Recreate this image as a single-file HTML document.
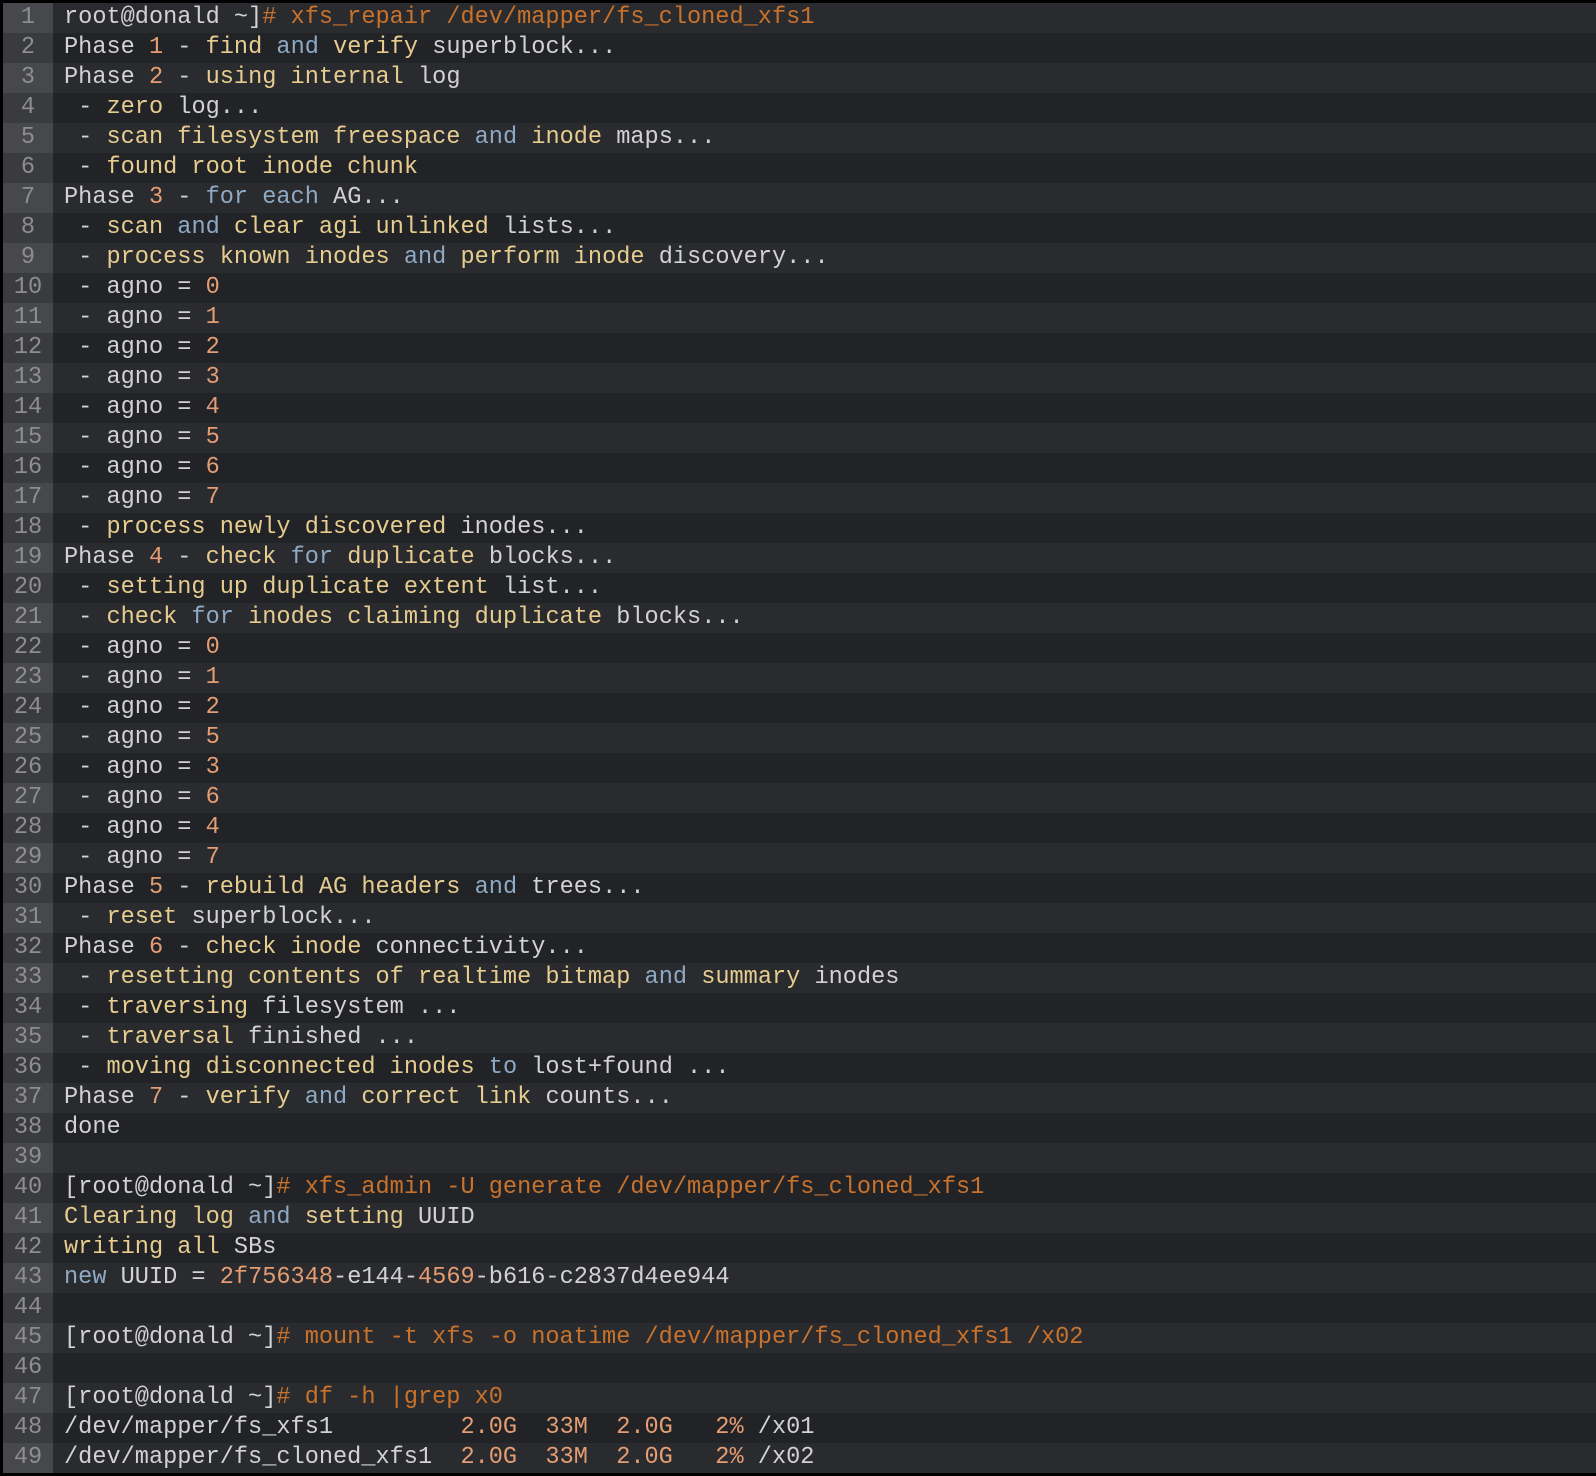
<!DOCTYPE html>
<html><head><meta charset="utf-8">
<style>
html,body{margin:0;padding:0;background:#000;}
body{width:1596px;height:1476px;overflow:hidden;}
#wrap{position:absolute;left:3px;top:3px;width:1593px;height:1470px;}
.r{height:30px;line-height:30px;display:flex;font-family:"Liberation Mono",monospace;font-size:23.6px;white-space:pre;color:#d2d2d2;}
.r:nth-child(odd){background:#2a2b2f;}
.r:nth-child(even){background:#222327;}
.g{width:50px;text-align:center;color:#8e8e90;flex:none;}
.r:nth-child(odd) .g{background:#47484b;}
.r:nth-child(even) .g{background:#3a3b3e;}
.t{padding-left:11px;}
.y{color:#e6cd8f;}
.b{color:#8ea9c4;}
.n{color:#e49d72;}
.o{color:#c8722c;}
</style></head><body><div id="wrap">
<div class="r"><div class="g">1</div><div class="t">root@donald ~]<span class="o"># xfs_repair /dev/mapper/fs_cloned_xfs1</span></div></div>
<div class="r"><div class="g">2</div><div class="t">Phase <span class="n">1</span> - <span class="y">find</span> <span class="b">and</span> <span class="y">verify</span> superblock...</div></div>
<div class="r"><div class="g">3</div><div class="t">Phase <span class="n">2</span> - <span class="y">using internal</span> log</div></div>
<div class="r"><div class="g">4</div><div class="t"> - <span class="y">zero</span> log...</div></div>
<div class="r"><div class="g">5</div><div class="t"> - <span class="y">scan filesystem freespace</span> <span class="b">and</span> <span class="y">inode</span> maps...</div></div>
<div class="r"><div class="g">6</div><div class="t"> - <span class="y">found root inode chunk</span></div></div>
<div class="r"><div class="g">7</div><div class="t">Phase <span class="n">3</span> - <span class="b">for each</span> AG...</div></div>
<div class="r"><div class="g">8</div><div class="t"> - <span class="y">scan</span> <span class="b">and</span> <span class="y">clear agi unlinked</span> lists...</div></div>
<div class="r"><div class="g">9</div><div class="t"> - <span class="y">process known inodes</span> <span class="b">and</span> <span class="y">perform inode</span> discovery...</div></div>
<div class="r"><div class="g">10</div><div class="t"> - agno = <span class="n">0</span></div></div>
<div class="r"><div class="g">11</div><div class="t"> - agno = <span class="n">1</span></div></div>
<div class="r"><div class="g">12</div><div class="t"> - agno = <span class="n">2</span></div></div>
<div class="r"><div class="g">13</div><div class="t"> - agno = <span class="n">3</span></div></div>
<div class="r"><div class="g">14</div><div class="t"> - agno = <span class="n">4</span></div></div>
<div class="r"><div class="g">15</div><div class="t"> - agno = <span class="n">5</span></div></div>
<div class="r"><div class="g">16</div><div class="t"> - agno = <span class="n">6</span></div></div>
<div class="r"><div class="g">17</div><div class="t"> - agno = <span class="n">7</span></div></div>
<div class="r"><div class="g">18</div><div class="t"> - <span class="y">process newly discovered</span> inodes...</div></div>
<div class="r"><div class="g">19</div><div class="t">Phase <span class="n">4</span> - <span class="y">check</span> <span class="b">for</span> <span class="y">duplicate</span> blocks...</div></div>
<div class="r"><div class="g">20</div><div class="t"> - <span class="y">setting up duplicate extent</span> list...</div></div>
<div class="r"><div class="g">21</div><div class="t"> - <span class="y">check</span> <span class="b">for</span> <span class="y">inodes claiming duplicate</span> blocks...</div></div>
<div class="r"><div class="g">22</div><div class="t"> - agno = <span class="n">0</span></div></div>
<div class="r"><div class="g">23</div><div class="t"> - agno = <span class="n">1</span></div></div>
<div class="r"><div class="g">24</div><div class="t"> - agno = <span class="n">2</span></div></div>
<div class="r"><div class="g">25</div><div class="t"> - agno = <span class="n">5</span></div></div>
<div class="r"><div class="g">26</div><div class="t"> - agno = <span class="n">3</span></div></div>
<div class="r"><div class="g">27</div><div class="t"> - agno = <span class="n">6</span></div></div>
<div class="r"><div class="g">28</div><div class="t"> - agno = <span class="n">4</span></div></div>
<div class="r"><div class="g">29</div><div class="t"> - agno = <span class="n">7</span></div></div>
<div class="r"><div class="g">30</div><div class="t">Phase <span class="n">5</span> - <span class="y">rebuild AG headers</span> <span class="b">and</span> trees...</div></div>
<div class="r"><div class="g">31</div><div class="t"> - <span class="y">reset</span> superblock...</div></div>
<div class="r"><div class="g">32</div><div class="t">Phase <span class="n">6</span> - <span class="y">check inode</span> connectivity...</div></div>
<div class="r"><div class="g">33</div><div class="t"> - <span class="y">resetting contents of realtime bitmap</span> <span class="b">and</span> <span class="y">summary</span> inodes</div></div>
<div class="r"><div class="g">34</div><div class="t"> - <span class="y">traversing</span> filesystem ...</div></div>
<div class="r"><div class="g">35</div><div class="t"> - <span class="y">traversal</span> finished ...</div></div>
<div class="r"><div class="g">36</div><div class="t"> - <span class="y">moving disconnected inodes</span> <span class="b">to</span> lost+found ...</div></div>
<div class="r"><div class="g">37</div><div class="t">Phase <span class="n">7</span> - <span class="y">verify</span> <span class="b">and</span> <span class="y">correct link</span> counts...</div></div>
<div class="r"><div class="g">38</div><div class="t">done</div></div>
<div class="r"><div class="g">39</div><div class="t"></div></div>
<div class="r"><div class="g">40</div><div class="t">[root@donald ~]<span class="o"># xfs_admin -U generate /dev/mapper/fs_cloned_xfs1</span></div></div>
<div class="r"><div class="g">41</div><div class="t"><span class="y">Clearing log</span> <span class="b">and</span> <span class="y">setting</span> UUID</div></div>
<div class="r"><div class="g">42</div><div class="t"><span class="y">writing all</span> SBs</div></div>
<div class="r"><div class="g">43</div><div class="t"><span class="b">new</span> UUID = <span class="n">2f756348</span>-e144-<span class="n">4569</span>-b616-c2837d4ee944</div></div>
<div class="r"><div class="g">44</div><div class="t"></div></div>
<div class="r"><div class="g">45</div><div class="t">[root@donald ~]<span class="o"># mount -t xfs -o noatime /dev/mapper/fs_cloned_xfs1 /x02</span></div></div>
<div class="r"><div class="g">46</div><div class="t"></div></div>
<div class="r"><div class="g">47</div><div class="t">[root@donald ~]<span class="o"># df -h |grep x0</span></div></div>
<div class="r"><div class="g">48</div><div class="t">/dev/mapper/fs_xfs1         <span class="n">2.0G  33M  2.0G   2%</span> /x01</div></div>
<div class="r"><div class="g">49</div><div class="t">/dev/mapper/fs_cloned_xfs1  <span class="n">2.0G  33M  2.0G   2%</span> /x02</div></div>
</div></body></html>
